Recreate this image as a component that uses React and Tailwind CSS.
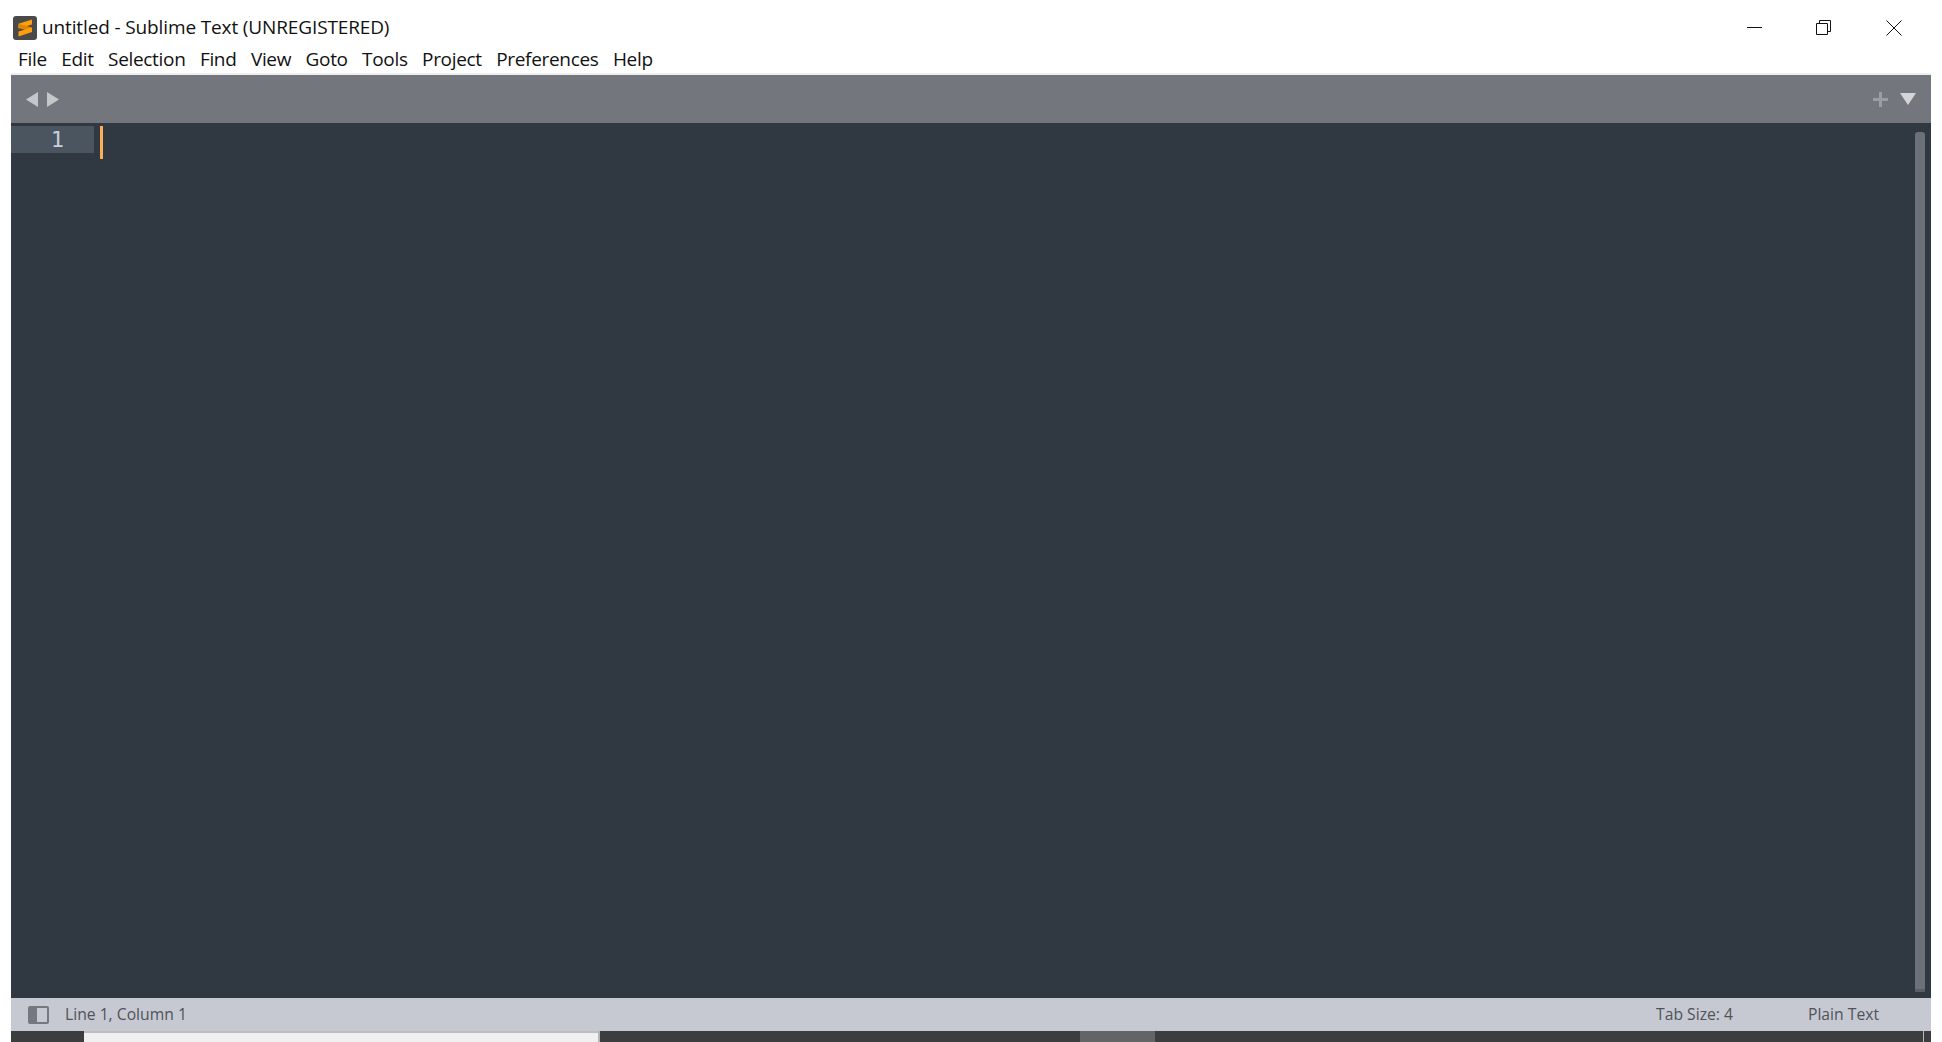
import React from "react";

const menus = ["File", "Edit", "Selection", "Find", "View", "Goto", "Tools", "Project", "Preferences", "Help"];

const Logo = () => (
  <svg width="24" height="24" viewBox="0 0 24 24" className="shrink-0">
    <rect x="0" y="0" width="24" height="24" rx="3" fill="#4a4a4a" />
    <path d="M19 3.5 L19 8.6 L5.5 12.6 L5.5 7.8 Z" fill="#ff9f0a" />
    <path d="M5.5 12 L19 16 L19 11.5 L5.5 7.8 Z" fill="#e08508" />
    <path d="M19 11.5 L19 16 L5.5 20.5 L5.5 15.6 Z" fill="#ff9f0a" />
  </svg>
);

const WindowButtons = () => (
  <div className="flex items-center gap-[54px] mr-[29px] mt-[11px]">
    <svg width="15" height="15" viewBox="0 0 15 15">
      <path d="M0 7.5H15" stroke="#111" strokeWidth="1" fill="none" />
    </svg>
    <svg width="15" height="15" viewBox="0 0 15 15">
      <path d="M0.5 3.5H11.5V14.5H0.5Z M3.5 3.5V0.5H14.5V11.5H11.5" stroke="#111" strokeWidth="1" fill="none" />
    </svg>
    <svg width="16" height="16" viewBox="0 0 16 16" className="ml-[1px]">
      <path d="M0.5 0.5L15.5 15.5M15.5 0.5L0.5 15.5" stroke="#111" strokeWidth="1" fill="none" />
    </svg>
  </div>
);

const TabBar = () => (
  <div className="h-[48px] bg-[#73777d] flex items-center justify-between pl-[15px] pr-[15px]">
    <div className="flex items-center gap-[9px]">
      <svg width="12" height="15" viewBox="0 0 12 15"><path d="M12 0V15L0 7.5Z" fill="#c5c8cb" /></svg>
      <svg width="12" height="15" viewBox="0 0 12 15"><path d="M0 0V15L12 7.5Z" fill="#c5c8cb" /></svg>
    </div>
    <div className="flex items-center gap-[12px]">
      <svg width="15" height="15" viewBox="0 0 15 15"><path d="M6 0H9V6H15V9H9V15H6V9H0V6H6Z" fill="#9a9da2" /></svg>
      <svg width="16" height="12" viewBox="0 0 16 12"><path d="M0 0H16L8 12Z" fill="#d3d5d8" /></svg>
    </div>
  </div>
);

const Editor = () => (
  <div className="flex-1 bg-[#303841] flex min-h-0 pt-[3px]">
    <div className="w-[83px] h-[27px] bg-[#4a5560] flex items-center justify-end pr-[30px] text-[#c5d0dc] text-[22px] font-['DejaVu_Sans_Mono',monospace]">
      1
    </div>
    <div className="w-[3px] h-[33px] ml-[6px] bg-[#f9ae58]"></div>
    <div className="flex-1"></div>
    <div className="w-[10px] mt-[6px] mb-[6px] mr-[6px] rounded-t-[3px] bg-[#6b7079] border-b-[3px] border-[#585d66]"></div>
  </div>
);

const StatusBar = () => (
  <div className="h-[33px] bg-[#c6c9d2] flex items-center pt-[1px] text-[#4f5358] text-[15.7px]">
    <div className="ml-[17px] w-[21px] h-[18px] rounded-[2px] border-2 border-[#75797f] flex overflow-hidden">
      <div className="w-[7px] bg-[#75797f]"></div>
    </div>
    <span className="ml-[16px]">Line 1, Column 1</span>
    <div className="flex-1"></div>
    <span>Tab Size: 4</span>
    <span className="ml-[75px] mr-[52px]">Plain Text</span>
  </div>
);

const Taskbar = () => (
  <div className="h-[11px] flex bg-[#3c3d3f] overflow-hidden">
    <div className="w-[73px]"></div>
    <div className="w-[514px] bg-[#f0f0f0] border-t-2 border-[#bdbdbd]"></div>
    <div className="w-[2px] bg-[#b4b4b4]"></div>
    <div className="w-[480px]"></div>
    <div className="w-[75px] bg-[#636466]"></div>
    <div className="w-[616px] relative">
      <span className="absolute left-[616px] top-[6px] text-white text-[15px] leading-[18px]">15:28</span>
    </div>
    <div className="flex-1"></div>
    <div className="w-[1px] bg-[#b8b8b8] mr-[7px]"></div>
  </div>
);

const App = () => {
  return (
    <div className="w-[1942px] h-[1042px] bg-white overflow-hidden pl-[11px] pr-[11px] font-['Open_Sans','Noto_Sans',sans-serif] flex flex-col">
      <div className="h-[44px] flex items-center justify-between text-[#111]">
        <div className="flex items-center mt-[11px] ml-[2px]">
          <Logo />
          <span className="ml-[5px] text-[19px] tracking-[-0.13px] whitespace-nowrap">untitled - Sublime Text (UNREGISTERED)</span>
        </div>
        <WindowButtons />
      </div>
      <div className="h-[29px] flex items-center pl-[7px] pt-[1px] gap-[14.4px] text-[19px] tracking-[-0.32px] text-[#111]">
        {menus.map((item, index) => (
          <span key={index}>{item}</span>
        ))}
      </div>
      <div className="h-[2px] bg-[#eeeeee]"></div>
      <TabBar />
      <Editor />
      <StatusBar />
      <Taskbar />
    </div>
  );
};

export default App;
